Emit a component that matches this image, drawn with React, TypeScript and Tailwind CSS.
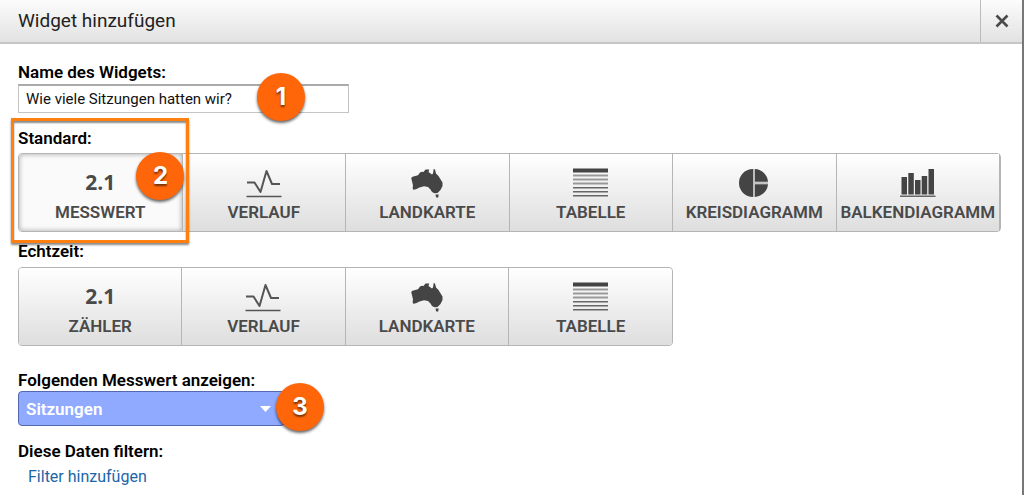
import type { ReactNode } from "react";

function TrendIcon() {
  return (
    <svg width="36" height="30" viewBox="0 0 36 30" fill="none" stroke="#555" aria-hidden="true">
      <path d="M1 14.500h7.500L14.500 24 20.500 3 26 16h8" strokeWidth="2" strokeLinejoin="round" />
      <path d="M0.500 28.500H35.500" strokeWidth="1.600" />
    </svg>
  );
}

function MapIcon() {
  return (
    <svg width="34" height="30" viewBox="0 0 34 30" fill="#444" aria-hidden="true">
      <path d="M1.200 10 2.500 8.700 8 7.200 10 4.500l2-.8 1.500.3L15.500 1.500h3.800L18.500 4l3.500 2.500L23 5.500 23.700 1l1.300.5 1 4 2.500 2.500L30 10.500l2.500 4V18l-2 4-3 3-3 .3-2.500-1.300-1.500-2.500-2.500-2.500-4-.7-4.500 1.200L6 21.200l-2.800.6L2.600 20 3 17.500Z" />
      <path d="M25.500 26.500h3.200l-.5 2.700-1.200.6-1-.7Z" />
    </svg>
  );
}

function TableIcon() {
  return (
    <svg width="36" height="30" viewBox="0 0 36 30" fill="#444" aria-hidden="true">
      <path d="M0 0.500h35v4H0z" />
      <path d="M0 6.500h35v2H0zM0 10.500h35v2H0zM0 14.500h35v2H0z" fill="#999" />
      <path d="M0 19h35v1.500H0zM0 23h35v1.500H0zM0 27h35v1.500H0z" fill="#666" />
    </svg>
  );
}

function PieIcon() {
  return (
    <svg width="30" height="30" viewBox="0 0 30 30" fill="#444" aria-hidden="true">
      <path d="M14 1v28a14 14 0 0 1 0-28Z" />
      <path d="M15.700 1A14 14 0 0 1 29 13.700H15.700Z" />
      <path d="M15.700 16.200H29A14 14 0 0 1 15.700 29Z" />
      <path d="M14 1h1.700v28H14z" fill="#bbb" />
      <path d="M15.700 14.500H29v1H15.700z" fill="#999" />
    </svg>
  );
}

function BarsIcon() {
  return (
    <svg width="36" height="30" viewBox="0 0 36 30" fill="#444" aria-hidden="true">
      <path d="M1.500 9h5.500v17.500H1.500zM8.300 5h5.500v21.500H8.300zM15 12h5.500v14.500H15zM21.700 8h5.500v18.500h-5.500zM28.500 1H34v25.500h-5.500z" />
      <path d="M0 27.500h35.500V29H0z" fill="#666" />
    </svg>
  );
}

function NumberIcon() {
  return <span className="mb-0.5 font-['Open_Sans',sans-serif] text-[21px] leading-[30px] font-bold">2.1</span>;
}

type Choice = { label: string; icon: ReactNode };

const shared: Choice[] = [
  { label: "VERLAUF", icon: <TrendIcon /> },
  { label: "LANDKARTE", icon: <MapIcon /> },
  { label: "TABELLE", icon: <TableIcon /> },
];

const standard: Choice[] = [
  { label: "MESSWERT", icon: <NumberIcon /> },
  ...shared,
  { label: "KREISDIAGRAMM", icon: <PieIcon /> },
  { label: "BALKENDIAGRAMM", icon: <BarsIcon /> },
];

const realtime: Choice[] = [{ label: "ZÄHLER", icon: <NumberIcon /> }, ...shared];

function ChoiceButton({ choice, selected = false }: { choice: Choice; selected?: boolean }) {
  return (
    <button
      type="button"
      aria-pressed={selected}
      className={
        "flex h-[77px] min-w-0 flex-col items-center pt-3.5 text-[17px] leading-5 font-semibold text-[#4a4a4a] not-last:border-r not-last:border-[#b5b5b5] last:rounded-r " +
        (selected
          ? "rounded-l bg-[#fafafa] shadow-[inset_0_0_4px_1px_#bbb]"
          : "bg-linear-to-b from-white to-[#dedede]")
      }
    >
      <span className="flex h-[30px] items-center">{choice.icon}</span>
      <span className="mt-1">{choice.label}</span>
    </button>
  );
}

function Badge({ n, place }: { n: number; place: string }) {
  return (
    <span
      className={
        "absolute z-10 flex size-12 items-center justify-center rounded-full bg-[#ff660a] font-[Inter,sans-serif] text-2xl font-bold text-white shadow-[0_2px_3px_#0009] text-shadow-[0_2px_2px_#0008] " +
        place
      }
    >
      {n}
    </span>
  );
}

export default function App() {
  return (
    <div className="min-h-screen border-r-2 border-[#777] bg-white font-[Roboto,sans-serif] text-[17px] leading-5 text-black">
      <header className="flex h-11 items-stretch justify-between border-b-2 border-[#c6c6c6] bg-linear-to-b from-[#fcfcfc] to-[#e2e2e2]">
        <h1 className="flex items-center pl-[18px] text-[19px] text-[#222]">Widget hinzufügen</h1>
        <button
          type="button"
          aria-label="Schließen"
          className="flex w-[42px] items-center justify-center border-l border-[#bbb]"
        >
          <svg width="14" height="14" viewBox="0 0 14 14" stroke="#4a4a4a" strokeWidth="2.600" aria-hidden="true">
            <path d="M1.500 1.500l11 11M12.500 1.500l-11 11" />
          </svg>
        </button>
      </header>

      <main className="pt-[18px] pr-[21px] pl-[18px]">
        <div className="relative w-[331px]">
          <label htmlFor="name" className="block font-semibold">Name des Widgets:</label>
          <input
            id="name"
            type="text"
            defaultValue="Wie viele Sitzungen hatten wir?"
            className="mt-0.5 block h-[29px] w-full border border-t-2 border-[#c4c4c4] border-t-[#aaa] bg-white px-[7px] text-[15px] text-[#111]"
          />
          <Badge n={1} place="top-[11px] right-11" />
        </div>

        <section className="mt-[15px]">
          <h2 className="font-semibold">Standard:</h2>
          <div className="relative mt-[5px] grid grid-cols-6 rounded border border-[#b5b5b5]">
            {standard.map((c, i) => (
              <ChoiceButton key={c.label} choice={c} selected={i === 0} />
            ))}
            <div className="pointer-events-none absolute -top-9 -left-2 h-[125px] w-[calc(100%/6+15px)] border-3 border-[#ff7f11] shadow-[0_2px_2px_#0007,inset_0_2px_2px_#0007]">
              <Badge n={2} place="top-[31px] right-0.5" />
            </div>
          </div>
        </section>

        <section className="mt-[9px]">
          <h2 className="font-semibold">Echtzeit:</h2>
          <div className="mt-1.5 grid w-4/6 grid-cols-4 overflow-hidden rounded border border-[#b5b5b5]">
            {realtime.map((c) => (
              <ChoiceButton key={c.label} choice={c} />
            ))}
          </div>
        </section>

        <div className="relative mt-6 w-[267px]">
          <label htmlFor="metric" className="block font-semibold">Folgenden Messwert anzeigen:</label>
          <select
            id="metric"
            className="mt-px block h-[35px] w-full appearance-none rounded border border-[#5468b0] bg-[#8faaff] px-[7px] font-semibold text-white"
          >
            <option>Sitzungen</option>
          </select>
          <svg className="pointer-events-none absolute right-3.5 bottom-3.5" width="11" height="6" viewBox="0 0 11 6" fill="#fff" aria-hidden="true">
            <path d="M0 0h11L5.500 6Z" />
          </svg>
          <Badge n={3} place="top-[13px] left-[258px]" />
        </div>

        <section className="mt-[15px]">
          <h2 className="font-semibold">Diese Daten filtern:</h2>
          <a href="#filter" className="mt-1.5 ml-2.5 block w-fit text-base leading-5 text-[#1a66a8]">Filter hinzufügen</a>
        </section>
      </main>
    </div>
  );
}
